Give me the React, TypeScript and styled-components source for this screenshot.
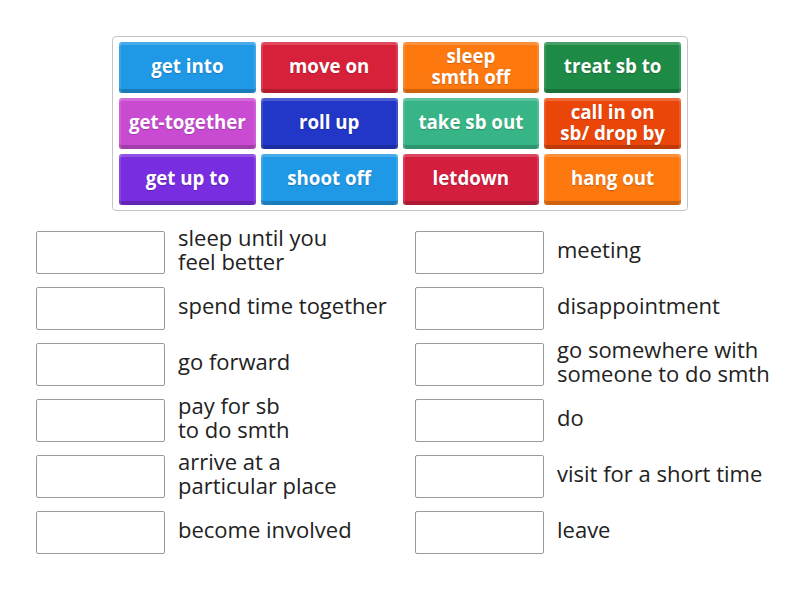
import React from "react";
import styled, { createGlobalStyle } from "styled-components";

const GlobalStyle = createGlobalStyle`
  body {
    margin: 0;
    background: #ffffff;
    font-family: "Open Sans", "Liberation Sans", sans-serif;
  }
`;

const Page = styled.div`
  width: 800px;
  height: 600px;
  padding-top: 36px;
  box-sizing: border-box;
`;

const Bank = styled.div`
  width: 576px;
  margin: 0 auto;
  box-sizing: border-box;
  border: 1px solid #c4c4c4;
  border-radius: 4px;
  padding: 5px 6px;
  display: grid;
  grid-template-columns: repeat(4, 1fr);
  grid-auto-rows: 51px;
  gap: 5px 5px;
`;

const Tile = styled.div<{ $bg: string }>`
  display: flex;
  align-items: center;
  justify-content: center;
  text-align: center;
  background: ${(p) => p.$bg};
  border-radius: 3px;
  box-shadow: inset 0 3px 0 rgba(255, 255, 255, 0.18),
    inset 2px 0 0 rgba(255, 255, 255, 0.12),
    inset -2px 0 0 rgba(255, 255, 255, 0.12),
    inset 0 -4px 0 rgba(0, 0, 0, 0.18);
  color: #ffffff;
  font-weight: 700;
  font-size: 18.7px;
  line-height: 21px;
  text-shadow: 0 1px 1px rgba(0, 0, 0, 0.2);
  padding-bottom: 4px;
  box-sizing: border-box;
`;

const Answers = styled.div`
  margin: 20px 0 0 36px;
  display: grid;
  grid-template-columns: 379px 379px;
  row-gap: 13px;
  grid-auto-flow: column;
  grid-template-rows: repeat(6, 43px);
`;

const Row = styled.div`
  display: flex;
  align-items: center;
`;

const Slot = styled.div`
  width: 129px;
  height: 43px;
  box-sizing: border-box;
  border: 1px solid #9a9a9a;
  border-radius: 2px;
  background: #ffffff;
  flex-shrink: 0;
`;

const Definition = styled.div`
  margin-left: 13px;
  font-size: 22px;
  line-height: 24px;
  color: #222222;
  padding-bottom: 8px;
`;

const tiles: { label: React.ReactNode; bg: string }[] = [
  { label: "get into", bg: "#1f98e6" },
  { label: "move on", bg: "#d7213a" },
  { label: <>sleep<br />smth off</>, bg: "#fd780f" },
  { label: "treat sb to", bg: "#1d8a45" },
  { label: "get-together", bg: "#c84bd2" },
  { label: "roll up", bg: "#2237c7" },
  { label: "take sb out", bg: "#38b586" },
  { label: <>call in on<br />sb/ drop by</>, bg: "#eb460a" },
  { label: "get up to", bg: "#782de0" },
  { label: "shoot off", bg: "#1f98e6" },
  { label: "letdown", bg: "#d41e3e" },
  { label: "hang out", bg: "#fd780f" },
];

const definitions: React.ReactNode[] = [
  <>sleep until you<br />feel better</>,
  "spend time together",
  "go forward",
  <>pay for sb<br />to do smth</>,
  <>arrive at a<br />particular place</>,
  "become involved",
  "meeting",
  "disappointment",
  <>go somewhere with<br />someone to do smth</>,
  "do",
  "visit for a short time",
  "leave",
];

const App: React.FC = () => {
  return (
    <Page>
      <GlobalStyle />
      <Bank>
        {tiles.map((t, i) => (
          <Tile key={i} $bg={t.bg}>
            <span>{t.label}</span>
          </Tile>
        ))}
      </Bank>
      <Answers>
        {definitions.map((d, i) => (
          <Row key={i}>
            <Slot />
            <Definition>{d}</Definition>
          </Row>
        ))}
      </Answers>
    </Page>
  );
};

export default App;
